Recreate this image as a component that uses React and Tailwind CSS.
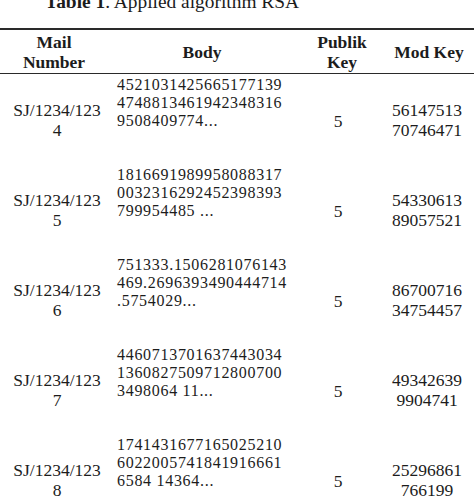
import React from "react";

const rows = [
  {
    num: "4",
    body: ["4521031425665177139", "4748813461942348316", "9508409774..."],
    mod: ["56147513", "70746471"],
  },
  {
    num: "5",
    body: ["1816691989958088317", "0032316292452398393", "799954485 ..."],
    mod: ["54330613", "89057521"],
  },
  {
    num: "6",
    body: ["751333.1506281076143", "469.2696393490444714", ".5754029..."],
    mod: ["86700716", "34754457"],
  },
  {
    num: "7",
    body: ["4460713701637443034", "1360827509712800700", "3498064 11..."],
    mod: ["49342639", "9904741"],
  },
  {
    num: "8",
    body: ["1741431677165025210", "6022005741841916661", "6584 14364..."],
    mod: ["25296861", "766199"],
  },
];

export default function App() {
  return (
    <div
      className="w-[474px] h-[498px] overflow-hidden bg-white text-[#1c1c1c]"
      style={{ fontFamily: '"Liberation Serif", "Times New Roman", serif' }}
    >
      <div className="mt-[-9px] h-[22px] pl-[45px] text-[19.4px] leading-[22px] whitespace-nowrap">
        <span className="font-bold">Table 1</span>. Applied algorithm RSA
      </div>
      <div className="mt-[15px] border-t-2 border-[#2a2a2a]">
        <div className="grid grid-cols-[114px_176px_100px_84px] h-[44px] border-b-[1.5px] border-[#2a2a2a] font-bold text-[17.5px] leading-[20px] text-center">
          <div className="flex items-center justify-center pr-[6px]">
            <div>
              <div>Mail</div>
              <div>Number</div>
            </div>
          </div>
          <div className="flex items-center justify-center">Body</div>
          <div className="flex items-center justify-center pl-[4px]">
            <div>
              <div>Publik</div>
              <div>Key</div>
            </div>
          </div>
          <div className="flex items-center justify-center pr-[6px]">Mod Key</div>
        </div>
        {rows.map((r) => (
          <div
            key={r.num}
            className="grid grid-cols-[114px_176px_100px_84px] h-[90px] text-[17.5px]"
          >
            <div className="flex items-center justify-center pt-[3px] text-center leading-[19.5px] whitespace-nowrap">
              <div>
                <div>SJ/1234/123</div>
                <div>{r.num}</div>
              </div>
            </div>
            <div className="pt-[2px] pl-[3px] text-[16px] tracking-[0.7px] leading-[18px] whitespace-nowrap">
              {r.body.map((l, i) => (
                <div key={i}>{l}</div>
              ))}
            </div>
            <div className="flex items-center justify-center pt-[3px] pr-[4px] leading-[20px]">
              5
            </div>
            <div className="flex items-center justify-center pt-[2px] pr-[10px] text-center leading-[20px]">
              <div>
                {r.mod.map((l, i) => (
                  <div key={i}>{l}</div>
                ))}
              </div>
            </div>
          </div>
        ))}
      </div>
    </div>
  );
}
